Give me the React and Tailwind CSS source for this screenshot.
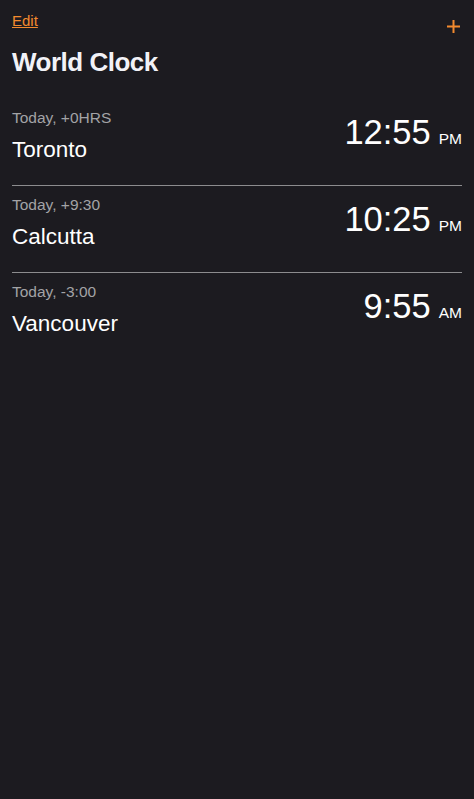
import React from 'react';

const clocks = [
    { offset: 'Today, +0HRS', city: 'Toronto', time: '12:55', ampm: 'PM' },
    { offset: 'Today, +9:30', city: 'Calcutta', time: '10:25', ampm: 'PM' },
    { offset: 'Today, -3:00', city: 'Vancouver', time: '9:55', ampm: 'AM' },
];

function ClockRow({ clock, last }) {
    return (
        <div className={`flex items-start justify-between h-[87px] pt-[10px] ${last ? '' : 'border-b border-[#8c8c8e]'}`}>
            <div className="flex flex-col">
                <span className="text-[15.5px] leading-[18px] text-[#a3a3a6]">{clock.offset}</span>
                <span className="text-[22.5px] leading-[26px] text-white mt-[10px]">{clock.city}</span>
            </div>
            <div className="flex items-baseline mt-[6px]">
                <span className="text-[34.5px] leading-none text-white">{clock.time}</span>
                <span className="ml-[8px] text-[15.5px] text-white">{clock.ampm}</span>
            </div>
        </div>
    );
}

export default function App() {
    return (
        <div className="min-h-[799px] bg-[#1c1b20] px-3 font-['Liberation_Sans',Arial,sans-serif]">
            <div className="flex justify-between items-start pt-[11px]">
                <a href="#" className="text-[15px] leading-[20px] text-[#f28a2e] underline">
                    Edit
                </a>
                <svg width="13" height="13" viewBox="0 0 13 13" className="mt-[9px] mr-[2px]">
                    <path d="M6.5 0v13M0 6.5h13" stroke="#f28a2e" strokeWidth="2" />
                </svg>
            </div>
            <h1 className="mt-[14px] text-[26px] leading-[30px] font-bold text-[#f2f2f7] tracking-[-0.5px]">
                World Clock
            </h1>
            <div className="mt-[22px]">
                {clocks.map((c, i) => (
                    <ClockRow key={c.city} clock={c} last={i === clocks.length - 1} />
                ))}
            </div>
        </div>
    );
}
